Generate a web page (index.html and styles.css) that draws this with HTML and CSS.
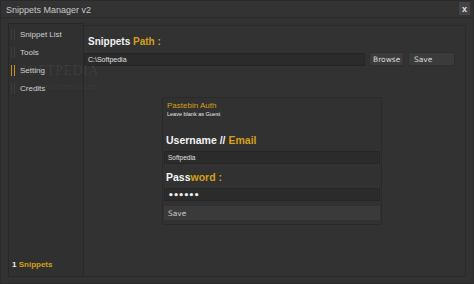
FILE: index.html
```html
<!DOCTYPE html>
<html>
<head>
<meta charset="utf-8">
<link rel="stylesheet" href="styles.css">
</head>
<body>
<div class="window">
  <div class="titlebar">
    <span class="title">Snippets Manager v2</span>
    <span class="close">x</span>
  </div>
  <div class="body">
    <div class="sidebar">
      <ul class="nav">
        <li class="item"><span class="bars"></span>Snippet List</li>
        <li class="item"><span class="bars"></span>Tools</li>
        <li class="item active"><span class="bars"></span>Setting</li>
        <li class="item"><span class="bars"></span>Credits</li>
      </ul>
      <div class="count"><span class="num">1</span> <span class="gold">Snippets</span></div>
    </div>
    <div class="main">
      <div class="heading">Snippets <span class="gold">Path :</span></div>
      <div class="pathrow">
        <div class="input path">C:\Softpedia</div>
        <button class="btn browse">Browse</button>
        <button class="btn save">Save</button>
      </div>
      <div class="auth">
        <div class="auth-title">Pastebin Auth</div>
        <div class="auth-sub">Leave blank as Guest</div>
        <div class="label user">Username // <span class="gold">Email</span></div>
        <div class="input field">Softpedia</div>
        <div class="label pass">Pass<span class="gold">word :</span></div>
        <div class="input field dots">&#8226;&#8226;&#8226;&#8226;&#8226;&#8226;</div>
        <div class="savebar">Save</div>
      </div>
    </div>
  </div>
  <div class="watermark">SOFTPEDIA<span class="wm-small">www.softpedia.com</span></div>
</div>
</body>
</html>
```
FILE: styles.css
```css
* { box-sizing: border-box; }
html, body { margin: 0; padding: 0; }
body {
  width: 474px;
  height: 284px;
  background: #323232;
  font-family: "Liberation Sans", Arial, sans-serif;
  color: #d8d8d8;
  overflow: hidden;
}
.window {
  position: relative;
  width: 474px;
  height: 284px;
  display: flex;
  flex-direction: column;
  border: 1px solid #2a2a2a;
}
.titlebar {
  height: 17px;
  display: flex;
  align-items: center;
  justify-content: space-between;
  padding: 0 3px 0 5px;
  border-bottom: 1px solid #2a2a2a;
  background: #333333;
}
.title { font-size: 9px; color: #c8c8c8; margin-top: 1px; }
.close {
  width: 11px;
  height: 13px;
  margin-top: -1px;
  background: #444;
  color: #e0e0e0;
  font-size: 9px;
  font-weight: bold;
  display: flex;
  align-items: center;
  justify-content: center;
}
.body {
  flex: 1;
  display: flex;
  padding: 5px 7px 6px 7px;
}
.sidebar {
  width: 76px;
  background: #303030;
  border: 1px solid #282828;
  display: flex;
  flex-direction: column;
  justify-content: space-between;
  padding: 1px 0 7px 2px;
}
.nav { list-style: none; margin: 0; padding: 0; }
.item {
  height: 18px;
  display: flex;
  align-items: center;
  font-size: 8px;
  color: #d0d0d0;
}
.bars {
  width: 4px;
  height: 11px;
  margin-right: 5px;
  border-left: 1px solid #3e3e3e;
  border-right: 1px solid #3e3e3e;
}
.item.active .bars {
  border-left: 1px solid #c8901a;
  border-right: 1px solid #c8901a;
}
.count { font-size: 8px; font-weight: bold; padding-left: 1px; }
.num { color: #eee; }
.gold { color: #d4a017; }
.main {
  flex: 1;
  border: 1px solid #2a2a2a;
  border-left: none;
  margin-top: 2px;
  display: flex;
  flex-direction: column;
  align-items: stretch;
}
.heading {
  font-size: 10px;
  font-weight: bold;
  color: #f0f0f0;
  padding: 10px 0 0 4px;
  height: 26px;
}
.pathrow {
  display: flex;
  align-items: center;
  gap: 4px;
  padding-right: 10px;
}
.input {
  height: 13px;
  background: #2b2b2b;
  border: 1px solid #262626;
  font-size: 7px;
  color: #e0e0e0;
  display: flex;
  align-items: center;
  padding-left: 3px;
}
.path { flex: 1; }
.btn {
  height: 14px;
  background: #3b3b3b;
  border: 1px solid #2e2e2e;
  color: #d8d8d8;
  font-family: "DejaVu Sans", sans-serif;
  font-size: 7.5px;
  padding: 0 3px;
  text-align: left;
}
.browse { width: 35px; }
.save { width: 47px; padding-left: 5px; }
.auth {
  width: 220px;
  margin: 31px 0 0 78px;
  height: 128px;
  border: 1px solid #2a2a2a;
  background: #313131;
  padding: 3px 1px 0 1px;
}
.auth-title { font-size: 8px; color: #d4a017; padding-left: 3px; }
.auth-sub { font-size: 5.5px; color: #e8e8e8; padding-left: 3px; margin-top: 1px; }
.label {
  font-size: 10.5px;
  line-height: 13px;
  font-weight: bold;
  color: #f4f4f4;
  padding-left: 2px;
  margin: 7px 0 4px;
}
.label.user { margin-top: 17px; }
.field { width: 216px; font-size: 6.5px; }
.dots {
  font-family: "DejaVu Sans", sans-serif;
  font-size: 9px;
  font-weight: bold;
  letter-spacing: -0.6px;
  color: #f0f0f0;
}
.savebar {
  width: 216px;
  height: 14px;
  margin-top: 5px;
  background: #3a3a3a;
  font-size: 7.5px;
  color: #c8c8c8;
  padding-left: 4px;
  display: flex;
  align-items: center;
  font-family: "DejaVu Sans", sans-serif;
}
.watermark {
  position: absolute;
  left: 18px;
  top: 62px;
  font-family: "Liberation Serif", serif;
  font-size: 14px;
  letter-spacing: 0.5px;
  color: rgba(255,255,255,0.07);
  pointer-events: none;
}
.wm-small {
  position: absolute;
  left: 18px;
  top: 20px;
  font-family: "Liberation Sans", sans-serif;
  font-size: 7px;
  letter-spacing: 0;
  color: rgba(255,255,255,0.06);
  white-space: nowrap;
}
```
